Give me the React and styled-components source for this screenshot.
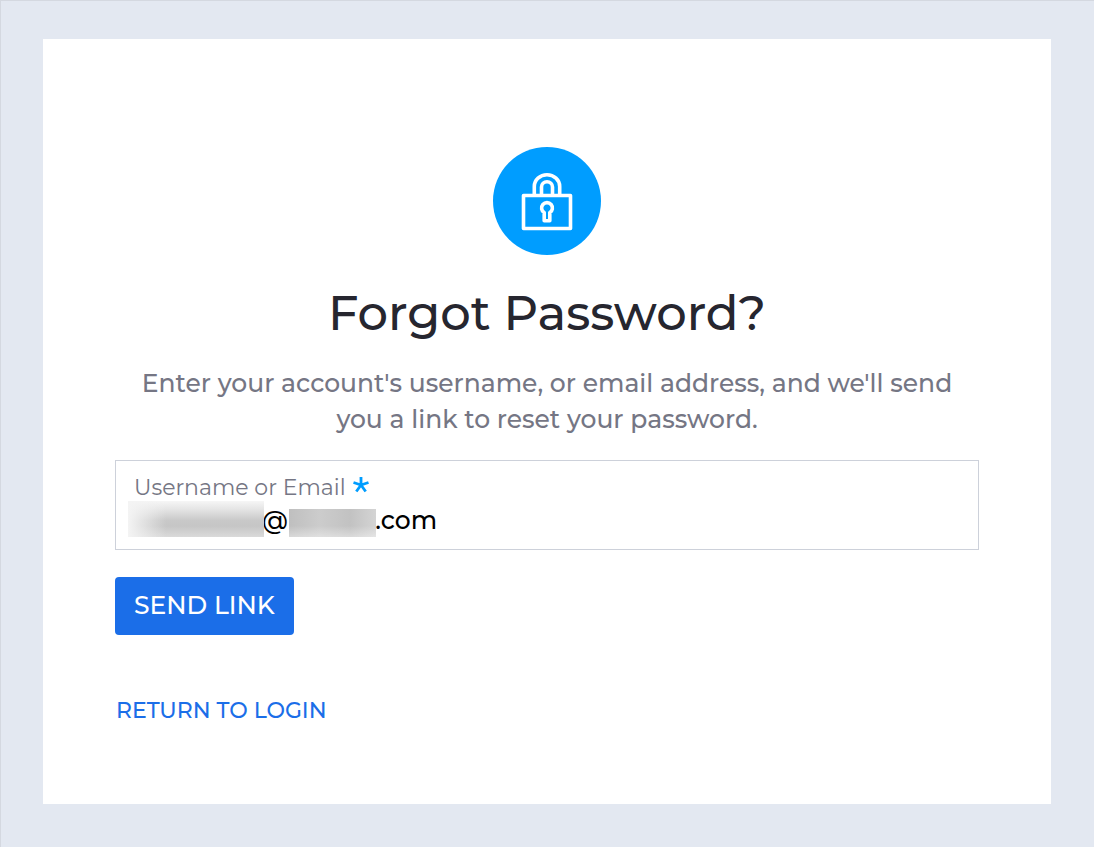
import React from 'react';
import styled, { createGlobalStyle } from 'styled-components';

const GlobalStyle = createGlobalStyle`
  * {
    box-sizing: border-box;
  }

  body {
    margin: 0;
    background-color: #e3e8f1;
    font-family: Montserrat, Inter, sans-serif;
    font-weight: 500;
  }
`;

const Page = styled.div`
  min-height: 100vh;
  padding: 38px 43px 43px 42px;
  border-top: 1px solid #d4d8e0;
  border-left: 1px solid #d4d8e0;
`;

const Card = styled.main`
  padding: 108px 72px 78px;
  background-color: #fff;
`;

const LockBadge = styled.svg`
  display: block;
  width: 108px;
  height: 108px;
  margin: 0 auto;
`;

const Title = styled.h1`
  margin: 24px 0 0;
  color: #26262f;
  font-size: 48px;
  font-weight: 500;
  line-height: 68px;
  text-align: center;
`;

const Intro = styled.p`
  margin: 18px 0 0;
  padding: 0 20px;
  color: #757684;
  font-size: 25px;
  line-height: 36px;
  text-align: center;
`;

const Field = styled.div`
  position: relative;
  height: 90px;
  margin-top: 23px;
  padding: 11px 18px;
  border: 1px solid #cdd1da;
`;

const FieldLabel = styled.label`
  display: flex;
  align-items: center;
  gap: 7px;
  height: 30px;
  color: #757684;
  font-size: 22px;
  font-weight: 400;
`;

const Required = styled.svg`
  width: 16px;
  height: 16px;
  margin-bottom: 4px;
`;

const TextInput = styled.input`
  display: block;
  width: 100%;
  height: 36px;
  padding: 0 0 0 128px;
  border: 0;
  outline: 0;
  color: #000;
  background: none;
  font-family: inherit;
  font-size: 25px;
  font-weight: 500;
`;

const Redaction = styled.span`
  position: absolute;
  bottom: 12px;
  left: ${({ $left }) => $left}px;
  width: ${({ $width }) => $width}px;
  height: ${({ $height }) => $height}px;
  background: ${({ $fill }) => $fill};
  pointer-events: none;
`;

const SendButton = styled.button`
  display: block;
  height: 58px;
  margin-top: 27px;
  padding: 0 19px 2px;
  border: 0;
  border-radius: 4px;
  color: #fff;
  background-color: #1b6ee8;
  font-family: inherit;
  font-size: 25px;
  font-weight: 500;
`;

const ReturnLink = styled.a`
  display: inline-block;
  margin: 61px 0 0 1px;
  color: #1b6ee8;
  font-size: 22px;
  line-height: 30px;
  text-decoration: none;
`;

const LONG_FILL = `
  linear-gradient(90deg, #f4f4f4, rgba(244, 244, 244, 0) 28%),
  linear-gradient(#f6f6f6, #e3e3e3 25%, #c8c8c8 55%, #c6c6c6 70%, #dadada)
`;
const SHORT_FILL = `
  linear-gradient(rgba(255, 255, 255, 0), rgba(255, 255, 255, 0) 60%, rgba(255, 255, 255, 0.4)),
  linear-gradient(90deg, #bfbfbf, #cccccc 35%, #c2c2c2 70%, #d4d4d4)
`;

export default function App() {
  return (
    <>
      <GlobalStyle />
      <Page>
        <Card>
          <LockBadge viewBox="0 0 108 108" fill="none" aria-hidden="true">
            <circle cx="54" cy="54" r="54" fill="#009dff" />
            <g stroke="#fff" strokeWidth="3.6" strokeLinejoin="round">
              <rect x="30.5" y="48.5" width="47" height="33" />
              <path d="M41.3 48V39.5a12.7 11.8 0 0 1 25.4 0V48" />
              <path d="M48.5 48v-8a5.5 5.3 0 0 1 11 0v8" />
              <path d="M51.2 65.6a5.4 5.4 0 1 1 5.6 0v8.2h-5.6z" />
            </g>
          </LockBadge>
          <Title>Forgot Password?</Title>
          <Intro>
            Enter your account&apos;s username, or email address, and we&apos;ll send you a link to
            reset your password.
          </Intro>
          <form onSubmit={e => e.preventDefault()}>
            <Field>
              <FieldLabel htmlFor="username">
                Username or Email
                <Required viewBox="0 0 16 16" aria-hidden="true">
                  <path d="M8 8V0M8 8l7.5-2.5M8 8l4.7 6.5M8 8l-4.7 6.5M8 8L.5 5.5" stroke="#009dff" strokeWidth="2.8" />
                </Required>
              </FieldLabel>
              <TextInput id="username" defaultValue={`@${'\u2003'.repeat(3)}\u2002.com`} />
              <Redaction $left={12} $width={136} $height={36} $fill={LONG_FILL} />
              <Redaction $left={173} $width={87} $height={28} $fill={SHORT_FILL} />
            </Field>
            <SendButton type="submit">SEND LINK</SendButton>
          </form>
          <ReturnLink href="#login">RETURN TO LOGIN</ReturnLink>
        </Card>
      </Page>
    </>
  );
}
